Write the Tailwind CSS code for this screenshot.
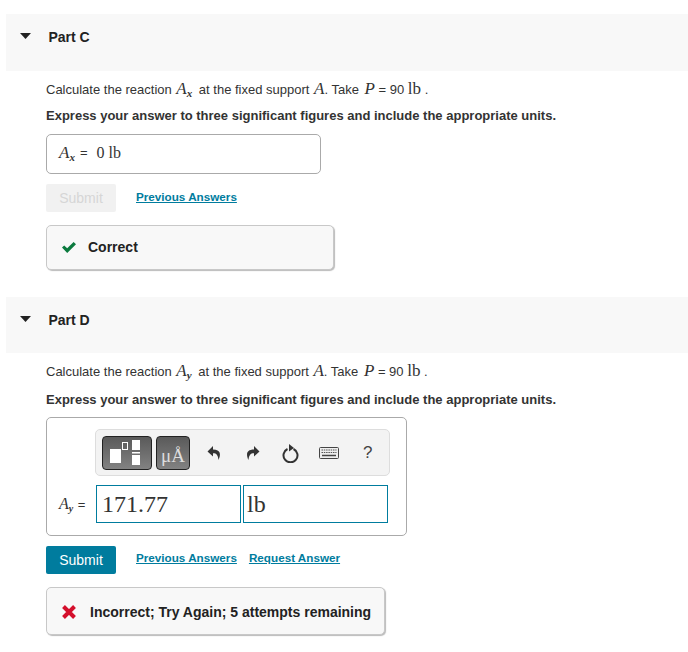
<!DOCTYPE html>
<html lang="en">
<head>
    <meta charset="UTF-8">
    <title>Part C and Part D</title>
    <script src="https://cdn.jsdelivr.net/npm/@tailwindcss/browser@4"></script>
</head>
<body class="bg-white font-['Liberation_Sans',Arial,sans-serif] text-[#333] h-[652px] overflow-hidden">

    <!-- Part C -->
    <div class="ml-[6px] mt-[14px] h-[57px] bg-[#f8f8f8] flex items-start pt-[14px]">
        <svg class="ml-[14px] mt-[5px] w-[11px] h-[6px]" viewBox="0 0 11 6"><path d="M0 0H11L5.5 6Z" fill="#222"/></svg>
        <span class="ml-[17.5px] text-[14px] leading-[18px] font-bold text-[#222]">Part C</span>
    </div>

    <div class="pl-[46px]">
        <p class="mt-[10px] h-[18px] text-[13px] leading-[18px] whitespace-nowrap">Calculate the reaction <span class="font-['Liberation_Serif',serif] italic text-[17px] leading-[10px] mr-[3px] ml-[1px]">A<sub class="text-[11px] font-bold">x</sub></span> at the fixed support <span class="font-['Liberation_Serif',serif] italic text-[17px] leading-[10px] ml-[1px]">A</span>. Take <span class="font-['Liberation_Serif',serif] italic text-[17px] leading-[10px] ml-[2px]">P</span> = 90 <span class="font-['Liberation_Serif',serif] text-[17px] leading-[10px]">lb</span> .</p>
        <p class="mt-[8px] h-[18px] text-[13px] leading-[18px] font-bold whitespace-nowrap">Express your answer to three significant figures and include the appropriate units.</p>

        <div class="mt-[9px] w-[275px] h-[40px] border border-[#aaa] rounded-[5px] flex items-center pl-[12px] pb-[2px] whitespace-nowrap">
            <span class="font-['Liberation_Serif',serif] italic text-[17px]">A<sub class="text-[11px] font-bold">x</sub></span>
            <span class="ml-[5px] text-[13px]">=</span>
            <span class="ml-[9px] font-['Liberation_Serif',serif] text-[16px]">0 lb</span>
        </div>

        <div class="mt-[10px] flex items-start">
            <div class="w-[70px] h-[28px] bg-[#f1f1f1] rounded-[2px] text-[14px] leading-[28px] text-center text-[#d6d6d6]">Submit</div>
            <a class="ml-[20px] mt-[5px] text-[11.7px] leading-[16px] font-bold text-[#007c9e] underline">Previous Answers</a>
        </div>

        <div class="mt-[13px] w-[288px] h-[45px] bg-[#f8f8f8] border border-[#c8c8c8] rounded-[5px] shadow-[1px_1px_1px_#bbb] flex items-center pl-[15px]">
            <svg class="w-[14px] h-[11px]" viewBox="0 0 14 11"><path d="M0 5.5L2.2 3.4L5.2 6.3L11.6 0L14 2.3L5.2 11Z" fill="#0b7a3e"/></svg>
            <span class="ml-[12px] text-[14px] font-bold text-[#222]">Correct</span>
        </div>
    </div>

    <!-- Part D -->
    <div class="ml-[6px] mt-[27px] h-[56px] bg-[#f8f8f8] flex items-start pt-[14px]">
        <svg class="ml-[14px] mt-[5px] w-[11px] h-[6px]" viewBox="0 0 11 6"><path d="M0 0H11L5.5 6Z" fill="#222"/></svg>
        <span class="ml-[17.5px] text-[14px] leading-[18px] font-bold text-[#222]">Part D</span>
    </div>

    <div class="pl-[46px]">
        <p class="mt-[10px] h-[18px] text-[13px] leading-[18px] whitespace-nowrap">Calculate the reaction <span class="font-['Liberation_Serif',serif] italic text-[17px] leading-[10px] mr-[3px] ml-[1px]">A<sub class="text-[11px] font-bold">y</sub></span> at the fixed support <span class="font-['Liberation_Serif',serif] italic text-[17px] leading-[10px] ml-[1px]">A</span>. Take <span class="font-['Liberation_Serif',serif] italic text-[17px] leading-[10px] ml-[2px]">P</span> = 90 <span class="font-['Liberation_Serif',serif] text-[17px] leading-[10px]">lb</span> .</p>
        <p class="mt-[10px] h-[18px] text-[13px] leading-[18px] font-bold whitespace-nowrap">Express your answer to three significant figures and include the appropriate units.</p>

        <div class="mt-[8px] w-[361px] h-[119px] border border-[#aaa] rounded-[5px] pt-[11px]">
            <!-- toolbar -->
            <div class="ml-[48px] w-[295px] h-[47px] bg-[#f3f3f3] border border-[#ddd] rounded-[5px] flex items-center pl-[6px]">
                <div class="w-[50px] h-[34px] rounded-[4px] border border-[#222] bg-gradient-to-b from-[#5a5a5a] to-[#828282] flex items-center justify-center">
                    <svg class="w-[48px] h-[32px]" viewBox="0 0 48 32">
                        <rect x="7" y="12" width="11" height="14" fill="#fff"/>
                        <rect x="19.5" y="5.5" width="5" height="7" fill="none" stroke="#fff"/>
                        <rect x="29" y="3" width="8" height="10" fill="#fff"/>
                        <rect x="29" y="15" width="8" height="1.5" fill="#fff"/>
                        <rect x="29" y="18" width="8" height="10" fill="#fff"/>
                    </svg>
                </div>
                <div class="ml-[4px] w-[34px] h-[34px] rounded-[4px] border border-[#222] bg-gradient-to-b from-[#5a5a5a] to-[#828282] text-[#ddd] font-['Liberation_Serif',serif] text-[19px] leading-[38px] text-center">μÅ</div>
                <svg class="ml-[17px] w-[14px] h-[16px]" viewBox="0 0 14 16"><path d="M6 1L0.5 6.5L6 11.5V8.2C9 8 11 9.5 11.5 15C14 10 14 4.6 6 4.6Z" fill="#333"/></svg>
                <svg class="ml-[25px] w-[14px] h-[16px]" viewBox="0 0 14 16"><path d="M8 1L13.5 6.5L8 11.5V8.2C5 8 3 9.5 2.5 15C0 10 0 4.6 8 4.6Z" fill="#333"/></svg>
                <svg class="ml-[22px] w-[17px] h-[20px]" viewBox="0 0 17 20"><path d="M5.5 6A7 7 0 1 0 11.5 6" fill="none" stroke="#333" stroke-width="2"/><path d="M7 1V8.5L12 5Z" fill="#333"/></svg>
                <svg class="ml-[20px] w-[20px] h-[12px]" viewBox="0 0 20 12">
                    <rect x="0.5" y="0.5" width="19" height="11" rx="1" fill="#eee" stroke="#444"/>
                    <path d="M2.5 3H17.5M2.5 5.5H17.5" stroke="#555" stroke-width="1.2" stroke-dasharray="1.5 0.8"/>
                    <path d="M3 8.5H17" stroke="#444" stroke-width="1.5"/>
                </svg>
                <span class="ml-[24px] text-[17px] text-[#444]">?</span>
            </div>
            <!-- answer row -->
            <div class="mt-[9px] flex items-center">
                <span class="ml-[12px] w-[37px] whitespace-nowrap"><span class="font-['Liberation_Serif',serif] italic text-[16px]">A<sub class="text-[10px] font-bold">y</sub></span> <span class="text-[13px]">=</span></span>
                <div class="w-[145px] h-[38px] border border-[#007c9e] font-['Liberation_Serif',serif] text-[24px] leading-[36px] pl-[5px] text-[#333]">171.77</div>
                <div class="ml-[2px] w-[145px] h-[38px] border border-[#007c9e] font-['Liberation_Serif',serif] text-[24px] leading-[36px] pl-[3px] text-[#333]">lb</div>
            </div>
        </div>

        <div class="mt-[10px] flex items-start">
            <div class="w-[70px] h-[28px] bg-[#007c9e] rounded-[2px] text-[14px] leading-[29px] text-center text-white">Submit</div>
            <a class="ml-[20px] mt-[4px] text-[11.7px] leading-[16px] font-bold text-[#007c9e] underline">Previous Answers</a>
            <a class="ml-[12px] mt-[4px] text-[11.7px] leading-[16px] font-bold text-[#007c9e] underline">Request Answer</a>
        </div>

        <div class="mt-[13px] w-[339px] h-[48px] bg-[#f8f8f8] border border-[#c8c8c8] rounded-[5px] shadow-[1px_1px_1px_#bbb] flex items-center pl-[15px] pt-[2px]">
            <svg class="w-[14px] h-[14px]" viewBox="0 0 14 14"><path d="M1.5 1.5L12.5 12.5M12.5 1.5L1.5 12.5" stroke="#d40f2c" stroke-width="4"/></svg>
            <span class="ml-[14px] text-[14px] font-bold text-[#222] whitespace-nowrap">Incorrect; Try Again; 5 attempts remaining</span>
        </div>
    </div>

</body>
</html>
